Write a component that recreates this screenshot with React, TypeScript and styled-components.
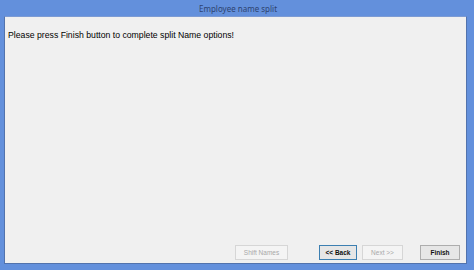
import React from "react";
import styled, { createGlobalStyle } from "styled-components";

const Global = createGlobalStyle`
  html, body { margin: 0; padding: 0; }
  body { font-family: "Liberation Sans", Arial, sans-serif; }
`;

const Window = styled.div`
  width: 474px;
  height: 270px;
  background: #6390dc;
  display: flex;
  flex-direction: column;
  box-sizing: border-box;
`;

const TitleBar = styled.div`
  height: 16px;
  display: flex;
  align-items: center;
  justify-content: center;
  font-family: "Noto Sans", "Segoe UI", sans-serif;
  font-size: 8px;
  color: #2e4370;
  padding-left: 2px;
`;

const Client = styled.div`
  flex: 1;
  margin: 0 7px 6px 4px;
  background: #f0f0f0;
  border: 1px solid #5273ad;
  border-top-color: #7c9bd4;
  display: flex;
  flex-direction: column;
  box-sizing: border-box;
`;

const Message = styled.div`
  flex: 1;
  padding: 13px 0 0 3px;
  font-family: "Liberation Sans", Arial, sans-serif;
  font-size: 8.7px;
  line-height: 10px;
  color: #000;
`;

const Footer = styled.div`
  display: flex;
  align-items: center;
  height: 15px;
  padding: 0 5px 3px 230px;
`;

const Button = styled.button<{ $w: number; $gap?: number; $focused?: boolean }>`
  width: ${(p) => p.$w}px;
  height: 15px;
  margin-left: ${(p) => p.$gap ?? 0}px;
  padding: 0;
  box-sizing: border-box;
  font-family: "Liberation Sans", Arial, sans-serif;
  font-size: 6.5px;
  font-weight: ${(p) => (p.disabled ? 400 : 700)};
  color: ${(p) => (p.disabled ? "#a8a8a8" : "#111")};
  background: ${(p) => (p.disabled ? "#f4f4f4" : "#e6e6e6")};
  border: 1px solid
    ${(p) => (p.$focused ? "#3c7fb1" : p.disabled ? "#d6d6d6" : "#adadad")};
  border-radius: 0;
  line-height: 13px;
`;

export default function App() {
  return (
    <>
      <Global />
      <Window>
        <TitleBar>Employee name split</TitleBar>
        <Client>
          <Message>Please press Finish button to complete split Name options!</Message>
          <Footer>
            <Button $w={53} disabled>Shift Names</Button>
            <Button $w={38} $gap={31} $focused>&lt;&lt; Back</Button>
            <Button $w={41} $gap={5} disabled>Next &gt;&gt;</Button>
            <Button $w={40} $gap={17}>Finish</Button>
          </Footer>
        </Client>
      </Window>
    </>
  );
}
